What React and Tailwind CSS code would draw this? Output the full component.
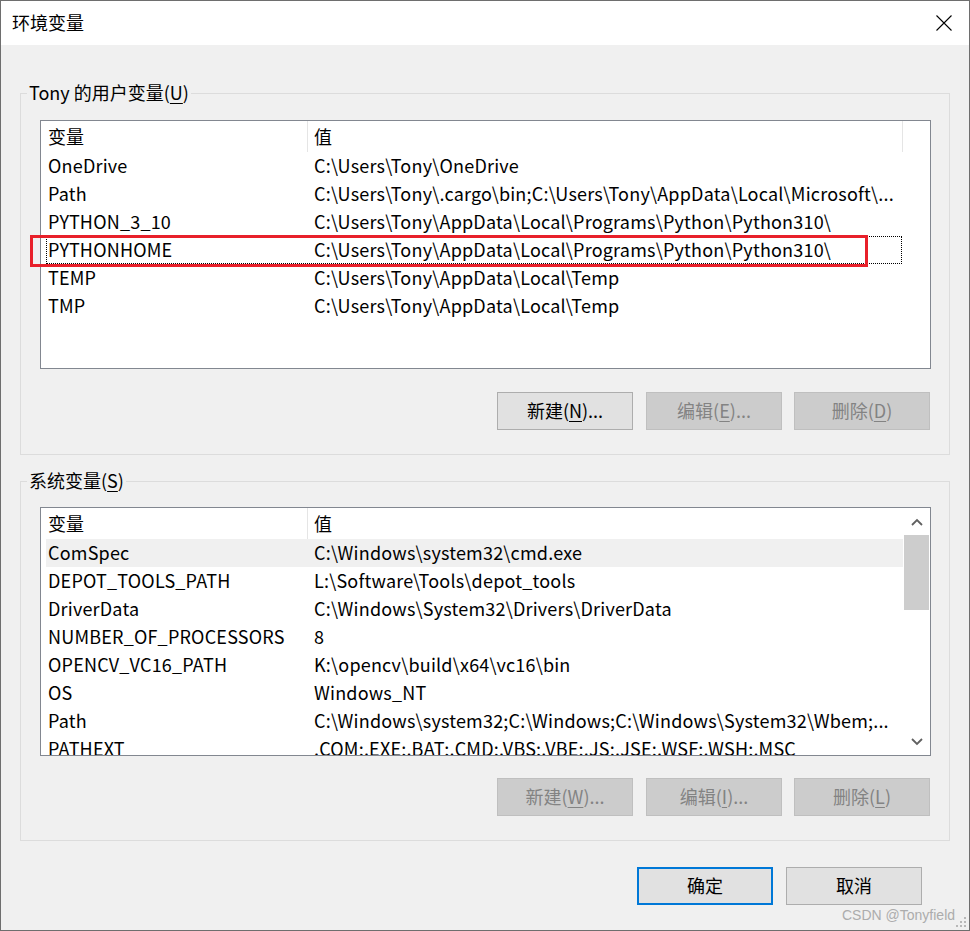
import React from 'react';

const userVars = [
  ['OneDrive', 'C:\\Users\\Tony\\OneDrive'],
  ['Path', 'C:\\Users\\Tony\\.cargo\\bin;C:\\Users\\Tony\\AppData\\Local\\Microsoft\\...'],
  ['PYTHON_3_10', 'C:\\Users\\Tony\\AppData\\Local\\Programs\\Python\\Python310\\'],
  ['PYTHONHOME', 'C:\\Users\\Tony\\AppData\\Local\\Programs\\Python\\Python310\\'],
  ['TEMP', 'C:\\Users\\Tony\\AppData\\Local\\Temp'],
  ['TMP', 'C:\\Users\\Tony\\AppData\\Local\\Temp'],
];

const systemVars = [
  ['ComSpec', 'C:\\Windows\\system32\\cmd.exe'],
  ['DEPOT_TOOLS_PATH', 'L:\\Software\\Tools\\depot_tools'],
  ['DriverData', 'C:\\Windows\\System32\\Drivers\\DriverData'],
  ['NUMBER_OF_PROCESSORS', '8'],
  ['OPENCV_VC16_PATH', 'K:\\opencv\\build\\x64\\vc16\\bin'],
  ['OS', 'Windows_NT'],
  ['Path', 'C:\\Windows\\system32;C:\\Windows;C:\\Windows\\System32\\Wbem;...'],
  ['PATHEXT', '.COM;.EXE;.BAT;.CMD;.VBS;.VBE;.JS;.JSE;.WSF;.WSH;.MSC'],
];

// 带助记符下划线的按钮
const WinButton = ({ label, mnemonic, suffix = '', disabled, primary, className = '' }) => (
  <div
    className={
      'w-[136px] h-[38px] flex items-center justify-center pb-[2px] ' +
      (primary
        ? 'border-2 border-[#0078d7] bg-[#e1e1e1] text-black '
        : disabled
        ? 'border border-[#bfbfbf] bg-[#cccccc] text-[#838383] '
        : 'border border-[#adadad] bg-[#e1e1e1] text-black ') +
      className
    }
  >
    <span>
      {label}
      {mnemonic && (
        <>
          (<span className="underline underline-offset-[3px]">{mnemonic}</span>)
        </>
      )}
      {suffix}
    </span>
  </div>
);

const ListHeader = ({ lastDivider }) => (
  <div className="h-[31px] flex shrink-0">
    <div className="w-[267px] pl-[7px] pb-[1px] flex items-center border-r border-[#e5e5e5]">变量</div>
    <div
      className={
        'pl-[6px] pb-[1px] flex items-center ' +
        (lastDivider ? 'w-[595px] border-r border-[#e5e5e5]' : 'flex-1')
      }
    >
      值
    </div>
  </div>
);

const Row = ({ name, value, focused, hot }) => (
  <div
    className={
      'h-[28px] flex items-center shrink-0 pb-[2px] tracking-[0.2px] ' +
      (focused ? 'border border-dotted border-black ' : '') +
      (hot ? 'bg-[#f0f0f0] ' : '')
    }
  >
    <div className={'whitespace-nowrap overflow-hidden ' + (focused ? 'w-[260px] pl-[1px]' : 'w-[261px] pl-[2px]')}>
      {name}
    </div>
    <div className="pl-[7px] whitespace-nowrap overflow-hidden flex-1">{value}</div>
  </div>
);

const Chevron = ({ up }) => (
  <svg width="12" height="8" viewBox="0 0 12 8">
    <path
      d={up ? 'M1 7 L6 2 L11 7' : 'M1 1 L6 6 L11 1'}
      fill="none"
      stroke="#606060"
      strokeWidth="1.8"
    />
  </svg>
);

const GroupBox = ({ title, mnemonic, children, className = '' }) => (
  <div className={'border border-[#dcdcdc] pl-[19px] pr-[18px] ' + className}>
    <div className="-mt-[14px] ml-[-13px] px-[2px] w-fit bg-[#f0f0f0] leading-[24px]">
      {title}(<span className="underline underline-offset-[3px]">{mnemonic}</span>)
    </div>
    {children}
  </div>
);

export default function App() {
  return (
    <div className="w-[970px] h-[931px] relative flex flex-col border border-[#6e6e6e] bg-[#f0f0f0] overflow-hidden text-[18px] text-black font-['Noto_Sans_CJK_SC',sans-serif]">
      {/* 标题栏 */}
      <div className="h-[44px] shrink-0 bg-white flex items-center justify-between pl-[11px] pr-[17px]">
        <span className="pb-[2px]">环境变量</span>
        <svg width="16" height="16" viewBox="0 0 16 16">
          <path d="M0.5 0.5 L15.5 15.5 M15.5 0.5 L0.5 15.5" stroke="#000" strokeWidth="1.1" />
        </svg>
      </div>

      <div className="flex flex-col px-[19px]">
        <GroupBox title="Tony 的用户变量" mnemonic="U" className="mt-[48px] pb-[24px]">
          <div className="mt-[16px] h-[249px] border border-[#828790] bg-white flex flex-col overflow-hidden">
            <ListHeader lastDivider />
            <div className="ml-[5px] w-[856px] flex flex-col">
              {userVars.map(([n, v]) => (
                <Row key={n} name={n} value={v} focused={n === 'PYTHONHOME'} />
              ))}
            </div>
          </div>
          <div className="mt-[23px] flex justify-end gap-[12px] mr-[1px]">
            <WinButton label="新建" mnemonic="N" suffix="..." className="mr-[1px]" />
            <WinButton label="编辑" mnemonic="E" suffix="..." disabled />
            <WinButton label="删除" mnemonic="D" disabled />
          </div>
        </GroupBox>

        <GroupBox title="系统变量" mnemonic="S" className="mt-[26px] pb-[24px]">
          <div className="mt-[15px] h-[249px] border border-[#828790] bg-white flex overflow-hidden">
            <div className="flex-1 flex flex-col overflow-hidden">
              <ListHeader />
              <div className="ml-[5px] flex flex-col">
                {systemVars.map(([n, v]) => (
                  <Row key={n} name={n} value={v} hot={n === 'ComSpec'} />
                ))}
              </div>
            </div>
            <div className="w-[27px] shrink-0 flex flex-col bg-white px-[1px]">
              <div className="h-[27px] flex items-center justify-center">
                <Chevron up />
              </div>
              <div className="flex-1 flex flex-col">
                <div className="h-[75px] bg-[#cdcdcd]" />
              </div>
              <div className="h-[27px] flex items-center justify-center">
                <Chevron />
              </div>
            </div>
          </div>
          <div className="mt-[22px] flex justify-end gap-[12px] mr-[1px]">
            <WinButton label="新建" mnemonic="W" suffix="..." disabled className="mr-[1px]" />
            <WinButton label="编辑" mnemonic="I" suffix="..." disabled />
            <WinButton label="删除" mnemonic="L" disabled />
          </div>
        </GroupBox>

        <div className="mt-[26px] flex justify-end gap-[13px] pr-[28px]">
          <WinButton label="确定" primary />
          <WinButton label="取消" />
        </div>
      </div>

      {/* 截图标注：红框 */}
      <div className="absolute left-[29px] top-[234px] w-[838px] h-[32px] border-[3px] border-[#e8202a]" />

      {/* 水印 */}
      <div className="absolute left-[841px] top-[904px] text-[14px] text-[#acacac] font-['Liberation_Sans',sans-serif]">
        CSDN @Tonyfield
      </div>
      <svg className="absolute right-[1px] bottom-[1px]" width="12" height="12" viewBox="0 0 12 12">
        <g fill="#b8b8b8">
          <rect x="8" y="0" width="2" height="2" />
          <rect x="4" y="4" width="2" height="2" />
          <rect x="8" y="4" width="2" height="2" />
          <rect x="0" y="8" width="2" height="2" />
          <rect x="4" y="8" width="2" height="2" />
          <rect x="8" y="8" width="2" height="2" />
        </g>
      </svg>
    </div>
  );
}
